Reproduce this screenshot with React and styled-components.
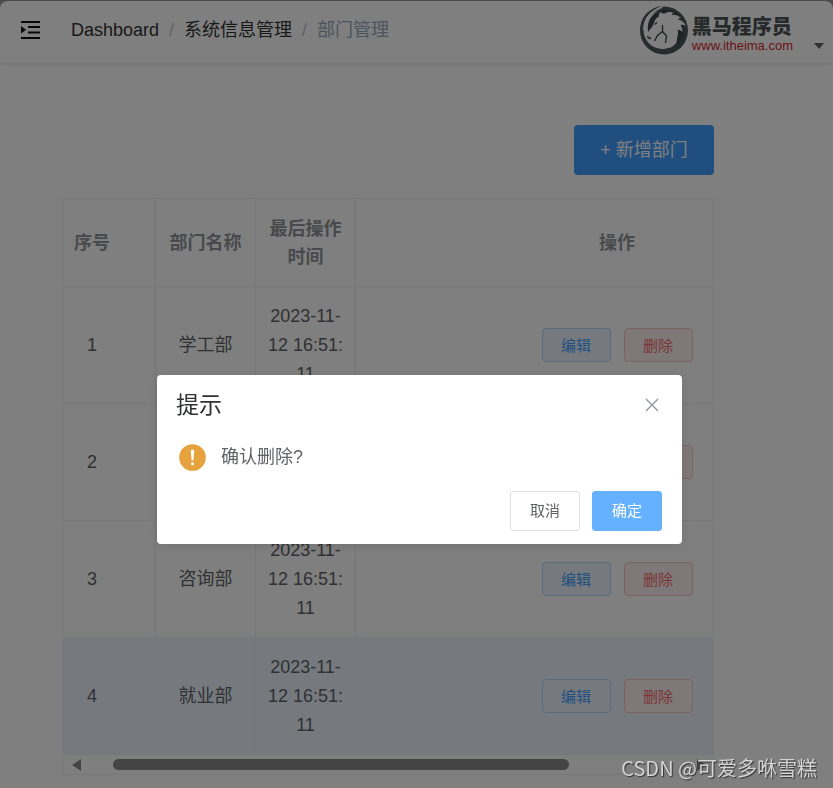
import { useState } from 'react'
import styled, { createGlobalStyle, css } from 'styled-components'

const GlobalStyle = createGlobalStyle`
    * {
        box-sizing: border-box;
    }

    html {
        background: #9a9a9a;
    }

    body {
        margin: 0;
        overflow: hidden;
        font-family: "Liberation Sans", "Noto Sans CJK SC", sans-serif;
        font-size: 18px;
        color: #606266;
    }

    button {
        font-family: inherit;
        cursor: pointer;
    }
`

const Page = styled.div`
    min-height: 100vh;
    margin-top: 1px;
    background: #fff;
    border-radius: 8px 8px 0 0;
`

const Header = styled.header`
    display: flex;
    align-items: center;
    height: 62px;
    padding: 0 9px 4px 20px;
    box-shadow: 0 1px 4px rgba(0, 21, 41, 0.12);
`

const IconButton = styled.button`
    display: flex;
    padding: 0;
    border: 0;
    background: none;
    color: inherit;
`

const Breadcrumb = styled.nav`
    display: flex;
    flex: 1;
    align-items: baseline;
    gap: 10px;
    margin-left: 30px;
    line-height: 24px;
    white-space: nowrap;
`

const Crumb = styled.a`
    color: ${ props => props.$current ? '#97a8be' : '#303133' };
    text-decoration: none;
`

const Separator = styled.span`
    color: #c0c4cc;
`

const UserMenu = styled.button`
    display: flex;
    align-items: flex-end;
    padding: 0;
    border: 0;
    background: none;
`

const LogoText = styled.span`
    display: flex;
    flex-direction: column;
    margin: 0 21px 0 4px;
    text-align: left;
`

const LogoName = styled.span`
    font-size: 20px;
    line-height: 20px;
    font-weight: 900;
    color: #4c5456;
`

const LogoUrl = styled.span`
    font-size: 13px;
    line-height: 18px;
    color: #d8262c;
`

const Caret = styled.span`
    margin-bottom: 6px;
    border: 5px solid transparent;
    border-top: 6px solid #606266;
    border-bottom: 0;
`

const Main = styled.main`
    padding: 62px 119px 12px 62px;
`

const Toolbar = styled.div`
    display: flex;
    justify-content: flex-end;
    margin-bottom: 23px;
`

const AddButton = styled.button`
    width: 140px;
    height: 50px;
    padding: 0 0 4px;
    border: 0;
    border-radius: 4px;
    background: #409eff;
    color: #fff;
    font-size: 18px;
`

const TableBox = styled.div`
    border: 1px solid #ebeef5;
`

const Table = styled.table`
    width: 100%;
    table-layout: fixed;
    border-collapse: separate;
    border-spacing: 0;
`

const cell = css`
    padding: 0 ${ props => props.$index ? '34px' : '10px' } 0 ${ props => props.$index ? '0' : '10px' };
    border-bottom: 1px solid #ebeef5;
    border-right: ${ props => props.$open ? '0' : '1px solid #ebeef5' };
    text-align: center;
    word-break: break-all;
`

const HeadCell = styled.th`
    ${cell}
    height: 88px;
    line-height: 28px;
    color: #909399;
`

const Cell = styled.td`
    ${cell}
    height: 117px;
    line-height: 29px;
`

const Row = styled.tr`
    background: ${ props => props.$active ? '#ecf5ff' : 'transparent' };
`

const Actions = styled.div`
    display: flex;
    justify-content: center;
    gap: 13px;
`

const ActionButton = styled.button`
    width: 69px;
    height: 34px;
    padding: 0 0 2px;
    border: 1px solid ${ props => props.$danger ? '#fbc4c4' : '#b3d8ff' };
    border-radius: 4px;
    background: ${ props => props.$danger ? '#fef0f0' : '#ecf5ff' };
    color: ${ props => props.$danger ? '#f56c6c' : '#409eff' };
    font-size: 15px;
`

const ScrollBar = styled.div`
    display: flex;
    align-items: center;
    justify-content: space-between;
    height: 19px;
    padding: 0 7px 0 9px;
`

const ScrollTrack = styled.div`
    flex: 1;
    padding: 0 128px 0 32px;
`

const ScrollThumb = styled.div`
    height: 11px;
    border-radius: 6px;
    background: #888;
`

const ScrollArrow = styled.span`
    border: 6px solid transparent;
    border-${ props => props.$right ? 'left' : 'right' }: 9px solid #888;
    border-${ props => props.$right ? 'right' : 'left' }: 0;
`

const Overlay = styled.div`
    position: fixed;
    inset: 0;
    display: flex;
    align-items: flex-start;
    justify-content: center;
    padding: 375px 0 0 6px;
    background: rgba(0, 0, 0, 0.5);
`

const Dialog = styled.div`
    width: 525px;
    max-width: 90%;
    padding: 14px 20px 13px 19px;
    border-radius: 4px;
    background: #fff;
    box-shadow: 0 2px 12px rgba(0, 0, 0, 0.1);
`

const DialogHeader = styled.div`
    display: flex;
    align-items: center;
    justify-content: space-between;
    padding-right: 3px;
`

const DialogTitle = styled.h2`
    margin: 0;
    font-size: 23px;
    line-height: 32px;
    font-weight: 400;
    color: #303133;
`

const DialogBody = styled.div`
    display: flex;
    align-items: center;
    gap: 15px;
    padding: 20px 0 18px 3px;
`

const Message = styled.p`
    margin: 0;
    line-height: 32px;
`

const DialogFooter = styled.div`
    display: flex;
    justify-content: flex-end;
    gap: 12px;
`

const DialogButton = styled.button`
    width: 70px;
    height: 40px;
    padding: 0 0 3px;
    border: 1px solid ${ props => props.$primary ? '#66b1ff' : '#dcdfe6' };
    border-radius: 3px;
    background: ${ props => props.$primary ? '#66b1ff' : '#fff' };
    color: ${ props => props.$primary ? '#fff' : '#606266' };
    font-size: 15px;
`

const Watermark = styled.div`
    position: fixed;
    right: 16px;
    bottom: 6px;
    font-family: "Noto Sans CJK SC", sans-serif;
    font-size: 20px;
    line-height: 28px;
    color: #d4d4d4;
    text-shadow: 1px 1px 1px #333;
    white-space: nowrap;
`

const FoldIcon = () => (
    <svg width="21" height="18" viewBox="0 0 21 18" fill="none" stroke="#111" strokeWidth="2">
        <path d="M1 1H20M8 6H20M8 11.5H20M1 17H20" />
        <path d="M1 5V12.5L6 8.7Z" fill="#111" stroke="none" />
    </svg>
)

const HorseLogo = () => (
    <svg width="48" height="50" viewBox="0 0 48 50">
        <circle cx="24" cy="25.5" r="24" fill="#4c5658" />
        <ellipse cx="22.5" cy="25" rx="19" ry="19" fill="#fff" />
        <path d="M8 27Q6 10 22 5Q37 3 43 16L44 30L36 42L38 26L20 12Z" fill="#3a4446" />
        <path d="M7.5 32.5L8.5 28Q12 23 14 18Q15 13 19 11.5Q18 9 21 7Q22 9 25 8.5Q29 6 34 8Q31 9 32 10Q37 9 41 13Q38 13 38 14.5Q43 15 46 21Q42 19 40.5 20Q43 23 42.5 27Q39 24 37.5 25Q39 34 32 42L22 44L12 40Z" fill="#fff" />
        <path d="M7.5 31L8.5 33H10L11 34M14.5 36L17.5 30.5L22.5 26.5V20M22.5 26.5L26.5 31L25.5 38M14.5 19.5L17 17.5" fill="none" stroke="#3a4446" strokeWidth="1.3" />
        <path d="M2.5 25Q3 7 24 0L22 3Q7 9 4.5 25Z" fill="#fff" />
        <path d="M0.5 25Q0 6 22 0.5L17 3Q3 10 3 25Z" fill="#4c5658" />
    </svg>
)

const CloseIcon = () => (
    <svg width="14" height="14" viewBox="0 0 14 14" stroke="#909399" strokeWidth="1.3">
        <path d="M1 1L13 13M13 1L1 13" />
    </svg>
)

const WarningIcon = () => (
    <svg width="27" height="27" viewBox="0 0 27 27">
        <circle cx="13.5" cy="13.5" r="13.3" fill="#e6a23c" />
        <path d="M11.8 7.2a1.7 1.7 0 0 1 3.4 0L14.4 16.5h-1.8Z" fill="#fff" />
        <circle cx="13.5" cy="19.8" r="1.5" fill="#fff" />
    </svg>
)

const departments = [
    { id: 1, name: '学工部', updatedAt: '2023-11-12 16:51:11' },
    { id: 2, name: '教研部', updatedAt: '2023-11-12 16:51:11' },
    { id: 3, name: '咨询部', updatedAt: '2023-11-12 16:51:11' },
    { id: 4, name: '就业部', updatedAt: '2023-11-12 16:51:11' },
]

const DepartmentTable = ({ activeId, onDelete }) => (
    <TableBox>
        <Table>
            <colgroup>
                <col style={{ width: 93 }} />
                <col style={{ width: 100 }} />
                <col style={{ width: 100 }} />
                <col />
                <col style={{ width: 192 }} />
            </colgroup>
            <thead>
                <tr>
                    <HeadCell $index>序号</HeadCell>
                    <HeadCell>部门名称</HeadCell>
                    <HeadCell>最后操作时间</HeadCell>
                    <HeadCell $open />
                    <HeadCell $open>操作</HeadCell>
                </tr>
            </thead>
            <tbody>
                { departments.map(item => (
                    <Row key={item.id} $active={item.id === activeId}>
                        <Cell $index>{ item.id }</Cell>
                        <Cell>{ item.name }</Cell>
                        <Cell>{ item.updatedAt }</Cell>
                        <Cell $open />
                        <Cell $open>
                            <Actions>
                                <ActionButton>编辑</ActionButton>
                                <ActionButton $danger onClick={onDelete}>删除</ActionButton>
                            </Actions>
                        </Cell>
                    </Row>
                )) }
            </tbody>
        </Table>
        <ScrollBar>
            <ScrollArrow />
            <ScrollTrack><ScrollThumb /></ScrollTrack>
            <ScrollArrow $right />
        </ScrollBar>
    </TableBox>
)

const ConfirmDialog = ({ onClose }) => (
    <Overlay>
        <Dialog role="dialog" aria-labelledby="dialog-title">
            <DialogHeader>
                <DialogTitle id="dialog-title">提示</DialogTitle>
                <IconButton aria-label="关闭" onClick={onClose}><CloseIcon /></IconButton>
            </DialogHeader>
            <DialogBody>
                <WarningIcon />
                <Message>确认删除?</Message>
            </DialogBody>
            <DialogFooter>
                <DialogButton onClick={onClose}>取消</DialogButton>
                <DialogButton $primary onClick={onClose}>确定</DialogButton>
            </DialogFooter>
        </Dialog>
    </Overlay>
)

const App = () => {
    const [open, setOpen] = useState(true)

    return (
        <>
            <GlobalStyle />
            <Page>
                <Header>
                    <IconButton aria-label="菜单"><FoldIcon /></IconButton>
                    <Breadcrumb>
                        <Crumb href="#">Dashboard</Crumb>
                        <Separator>/</Separator>
                        <Crumb href="#">系统信息管理</Crumb>
                        <Separator>/</Separator>
                        <Crumb as="span" $current>部门管理</Crumb>
                    </Breadcrumb>
                    <UserMenu>
                        <HorseLogo />
                        <LogoText>
                            <LogoName>黑马程序员</LogoName>
                            <LogoUrl>www.itheima.com</LogoUrl>
                        </LogoText>
                        <Caret />
                    </UserMenu>
                </Header>
                <Main>
                    <Toolbar>
                        <AddButton>+ 新增部门</AddButton>
                    </Toolbar>
                    <DepartmentTable activeId={4} onDelete={() => setOpen(true)} />
                </Main>
            </Page>
            { open && <ConfirmDialog onClose={() => setOpen(false)} /> }
            <Watermark>CSDN @可爱多咻雪糕</Watermark>
        </>
    )
}

export default App
